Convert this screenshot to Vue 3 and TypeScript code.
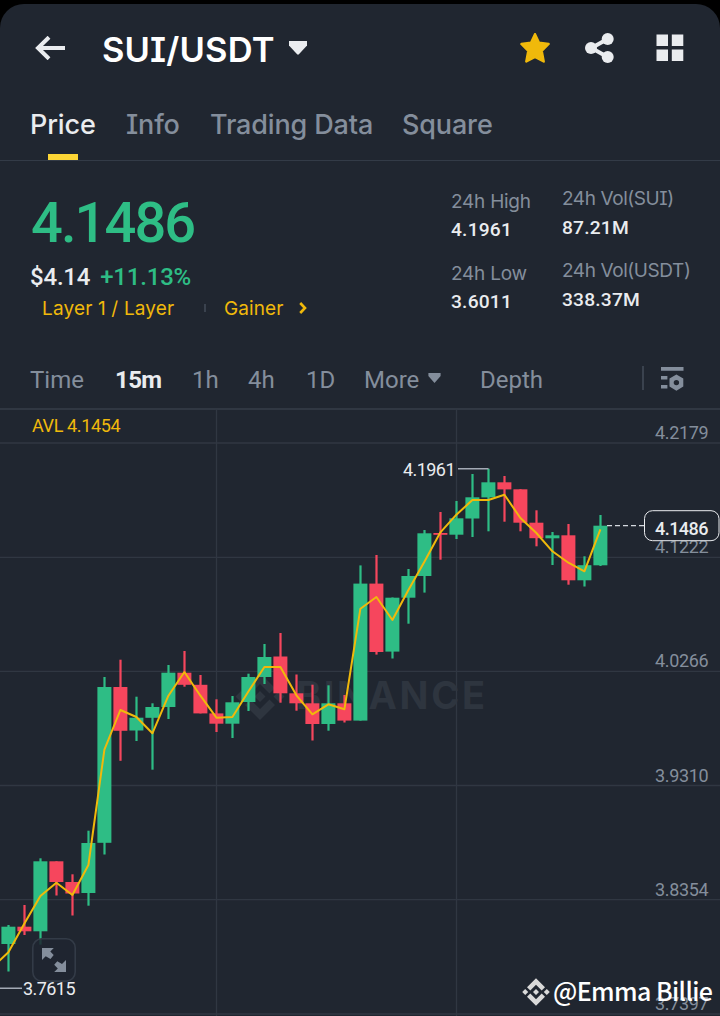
<script setup lang="ts">
type Candle = [high: number, top: number, bottom: number, low: number, up: boolean]

const tabs = ['Price', 'Info', 'Trading Data', 'Square']
const stats = [
  { label: '24h High', value: '4.1961' },
  { label: '24h Vol(SUI)', value: '87.21M' },
  { label: '24h Low', value: '3.6011' },
  { label: '24h Vol(USDT)', value: '338.37M' },
]
const intervals = ['Time', '15m', '1h', '4h', '1D']

const U = true
const D = false
const candles: Candle[] = [
  [925, 926.7, 944, 971.5, U], [905, 926.7, 931.3, 935, D], [858.3, 861.3, 931.3, 944.6, U],
  [861.3, 861.3, 882, 895.5, D], [874.3, 882, 893.5, 915.5, D], [830.7, 843, 893, 905.7, U],
  [677, 687, 842.8, 854.5, U], [659.7, 687, 730.8, 760.8, D], [696.7, 717.7, 730.5, 741, U],
  [703.3, 707, 717.8, 769.7, U], [665, 672.7, 707, 719, U], [651, 672.7, 684.8, 686.7, D],
  [675, 684.8, 713.4, 713.4, D], [699.3, 713.4, 723.7, 732, D], [696, 702.3, 723.7, 738, U],
  [673.7, 677, 702, 711, U], [644, 657, 677, 684, U], [633, 656.5, 693.3, 702.7, D],
  [674.5, 693.3, 703.3, 710.7, D], [684.7, 703.3, 724, 740.5, D], [685.3, 703.3, 724, 730.7, U],
  [695, 703.3, 720.6, 722.5, D], [565.4, 583.6, 720.6, 720.6, U], [555, 583.6, 652, 654.6, D],
  [597.5, 597.7, 651.6, 658.5, U], [569, 576, 597.7, 623.7, U], [530, 533.3, 576, 592.6, U],
  [512, 533, 534.8, 559.7, D], [501, 518.3, 534.7, 539, U], [474, 497.3, 518.5, 537, U],
  [468.7, 482.3, 497.4, 531.3, U], [476, 482.3, 489.4, 521.7, D], [489.2, 489.3, 522.7, 531.3, D],
  [510.3, 522.7, 538.2, 546.3, D], [532, 535.3, 538.3, 565, U], [524, 535.3, 580.3, 584.7, D],
  [556.3, 565.2, 580.3, 586.5, U], [515, 525.7, 565.3, 566, U],
]
const average = [
  952.3, 923.5, 896, 882.7, 895, 865, 749.7, 710, 717, 733.3, 695.7, 672, 695.7, 717.7, 717,
  691.5, 667, 667, 695.3, 714.3, 704.3, 709.3, 608.7, 597, 620, 590, 561.7, 532.3, 514.7, 500,
  500, 494.7, 518, 533, 551.3, 562.7, 571.3, 529.3,
]
const CHART_TOP = 408
const cx = (i: number): number => 8.4 + i * 16
const bars = candles.map(([high, top, bottom, low, up], i) => ({
  x: cx(i), high, top, low, height: bottom - top, up,
}))
const avgPoints = ['-1,961', ...average.map((y, i) => `${cx(i)},${y}`)].join(' ')
const gridRows = [443, 557.3, 671.4, 785.5, 899.6, 1014]
const scale = [
  { y: 439, text: '4.2179' }, { y: 553.4, text: '4.1222' }, { y: 667.3, text: '4.0266' },
  { y: 782, text: '3.9310' }, { y: 896, text: '3.8354' }, { y: 1010, text: '3.7397' },
]
</script>

<template>
  <main class="screen">
    <header class="topbar">
      <svg class="back" width="30" height="24" viewBox="0 0 30 24">
        <path d="M30 12H3M14 1.2 3 12 14 22.8" fill="none" stroke="#eaecef" stroke-width="4" />
      </svg>
      <h1 class="pair">SUI/USDT</h1>
      <svg class="caret" width="18" height="14" viewBox="0 0 18 14">
        <path d="M0 0H18V4.5L9.9 13.3Q9 14.200 8.100 13.300L0 4.500Z" fill="#eaecef" />
      </svg>
      <svg class="star" width="30" height="30" viewBox="0 0 30 30">
        <path d="M15 1.200 19 9.700 28.600 11 21.700 17.800 23.700 28.500 15 24 6.300 28.500 8.300 17.800 1.400 11 11 9.700Z" fill="#f0b90b" stroke="#f0b90b" stroke-width="2.400" stroke-linejoin="round" />
      </svg>
      <svg class="share" width="30" height="30" viewBox="0 0 30 30">
        <path d="M22.500 6 6.500 15 22.500 24" fill="none" stroke="#eaecef" stroke-width="4" />
        <g fill="#eaecef"><circle cx="22.700" cy="6" r="6" /><circle cx="6" cy="15" r="6" /><circle cx="22.700" cy="24" r="6" /></g>
      </svg>
      <svg class="apps" width="28" height="28" viewBox="0 0 28 28">
        <path d="M.5 .5H12V12H.5ZM15.800 .5H27.300V12H15.800ZM.5 15.600H12V27.100H.5ZM15.800 15.600H27.300V27.100H15.800Z" fill="#eaecef" />
      </svg>
    </header>

    <nav class="tabs">
      <span v-for="(tab, i) in tabs" :key="tab" class="tab" :class="{ active: i === 0 }">{{ tab }}</span>
    </nav>

    <section class="summary">
      <div class="quote">
        <div class="last">4.1486</div>
        <div class="fiat"><span class="usd">$4.14</span><span class="change">+11.13%</span></div>
        <div class="tags">
          <span class="layer">Layer 1 / Layer</span><i class="sep"></i><span class="gainer">Gainer</span>
          <svg class="chevron" width="8" height="12" viewBox="0 0 8 12">
            <path d="M1.200 1 6 6 1.200 11" fill="none" stroke="#f0b90b" stroke-width="2.600" />
          </svg>
        </div>
      </div>
      <dl class="stats">
        <div v-for="(s, i) in stats" :key="s.label" class="stat" :class="{ volume: i % 2 === 1 }">
          <dt>{{ s.label }}</dt>
          <dd>{{ s.value }}</dd>
        </div>
      </dl>
    </section>

    <nav class="intervals">
      <span v-for="(t, i) in intervals" :key="t" class="interval" :class="{ active: i === 1 }">{{ t }}</span>
      <span class="interval more">More
        <svg width="13" height="10" viewBox="0 0 13 10"><path d="M.4 0H12.600V3L6.500 10 .4 3Z" fill="#848e9c" /></svg>
      </span>
      <span class="interval">Depth</span>
      <i class="rule"></i>
      <svg class="settings" width="24" height="25" viewBox="0 0 24 25">
        <path d="M1 1H23.500V4.800H1ZM1 10H7.400V13.500H1ZM1 19H7.400V22.500H1Z" fill="#848e9c" />
        <path fill-rule="evenodd" d="M16.400 8.500 23.300 12.600V20.600L16.400 24.700 9.500 20.600V12.600ZM16.400 13.900A2.700 2.700 0 1 0 16.400 19.300 2.700 2.700 0 1 0 16.400 13.900Z" fill="#848e9c" />
      </svg>
    </nav>

    <svg class="chart" width="720" height="608" :viewBox="`0 ${CHART_TOP} 720 608`">
      <g class="grid">
        <line x1="0" x2="720" y1="409" y2="409" stroke-width="2" />
        <line v-for="y in gridRows" :key="y" x1="0" x2="720" :y1="y" :y2="y" />
        <line x1="216.500" x2="216.500" y1="409" y2="1016" />
        <line x1="456.500" x2="456.500" y1="409" y2="1016" />
      </g>

      <g class="brand">
        <path d="M260 673 275 688 269.500 693.500 260 684 250.500 693.500 245 688ZM241 691 246.500 696.500 241 702 235.500 696.500ZM279 691 284.500 696.500 279 702 273.500 696.500ZM260 691 265.500 696.500 260 702 254.500 696.500ZM245 705 250.500 699.500 260 709 269.500 699.500 275 705 260 720Z" />
        <text x="296" y="709" textLength="189">BINANCE</text>
      </g>

      <text v-for="s in scale" :key="s.text" class="tick" x="655" :y="s.y" textLength="53.500">{{ s.text }}</text>

      <g v-for="b in bars" :key="b.x" :class="b.up ? 'up' : 'down'">
        <rect :x="b.x - 1" :y="b.high" width="2.200" :height="b.low - b.high" />
        <rect :x="b.x - 7" :y="b.top" width="14" :height="b.height" />
      </g>
      <polyline class="avl" :points="avgPoints" />
      <text class="avl-label" x="32" y="432" textLength="88.500">AVL 4.1454</text>

      <path class="pointer" d="M458 468.700H488.500M0 988.300H22" />
      <text class="extreme" x="403" y="475.700" textLength="52.500">4.1961</text>
      <text class="extreme" x="23" y="995" textLength="52.500">3.7615</text>

      <line class="dash" x1="607" x2="644" y1="525.600" y2="525.600" />
      <rect class="pricebox" x="644.500" y="510.700" width="74.500" height="30" rx="8" />
      <text class="price" x="655" y="535" textLength="53.500">4.1486</text>

      <rect class="expand" x="32.800" y="938.700" width="42.400" height="42.400" rx="9" />
      <path class="arrows" d="M42 948H53.800L50.300 951.500 53.700 955 50.500 959 45.700 956.300 42 960ZM66 972H54.200L57.800 968.500 54.200 964.800 57.300 961.300 62 964 66 960Z" />

      <g class="signature">
        <path d="M536 978.300 545 987.200 541.700 990.500 536 984.800 530.300 990.500 527 987.200ZM525.200 989 528.200 992 525.200 995 522.200 992ZM546.800 989 549.800 992 546.800 995 543.800 992ZM536 989 539 992 536 995 533 992ZM527 996.800 530.300 993.500 536 999.200 541.700 993.500 545 996.800 536 1005.700Z" />
        <text x="553" y="1001" textLength="160">@Emma Billie</text>
      </g>
    </svg>
  </main>
</template>

<style>
html { background: #000; }
</style>

<style scoped>
.screen {
  width: 720px;
  height: 1012px;
  margin-top: 4px;
  overflow: hidden;
  border-radius: 24px 24px 0 0;
  background: #202630;
  color: #eaecef;
  font-family: Inter, "Liberation Sans", sans-serif;
  font-feature-settings: "cv08";
  display: flex;
  flex-direction: column;
}
svg { display: block; flex: none; }
.topbar { height: 88px; display: flex; align-items: center; padding-left: 35px; flex: none; }
.pair { margin: 2px 0 0 37px; width: 174px; font-size: 34.500px; font-weight: 600; color: #fff; letter-spacing: .15px; white-space: nowrap; }
.caret { margin-left: 13px; }
.star { margin-left: 213px; }
.share { margin-left: 35px; }
.apps { margin-left: 41px; }

.tabs { height: 68px; flex: none; display: grid; grid-template-columns: 96px 84px 192px 120px; padding-left: 30px; border-bottom: 1px solid #333b47; }
.tab { font-size: 27px; font-weight: 500; line-height: 66px; letter-spacing: -.15px; color: #848e9c; white-space: nowrap; }
.tab.active { color: #eaecef; position: relative; }
.tab.active::after { content: ""; position: absolute; left: 18px; bottom: 0; width: 30px; height: 6px; background: #fcd535; }

.summary { height: 187px; flex: none; display: grid; grid-template-columns: 421px 1fr; padding-left: 30px; }
.last { font: 500 56px/60px Roboto, sans-serif; color: #2ebd85; letter-spacing: -1.900px; margin-top: 32px; padding-left: 1px; }
.fiat { font: 500 24px/30px Roboto, sans-serif; letter-spacing: -.2px; margin-top: 9px; display: flex; gap: 10px; }
.change { color: #2ebd85; }
.tags { display: flex; align-items: center; height: 30px; margin-top: 1px; padding-left: 12px; color: #f0b90b; font-size: 19px; }
.layer { width: 162px; letter-spacing: .16px; }
.sep { width: 2px; height: 8px; background: #3a424e; }
.gainer { margin-left: 18px; width: 75px; letter-spacing: .1px; }
.stats { margin: 27px 0 0; display: grid; grid-template-columns: 111px 1fr; grid-auto-rows: 72px; }
.stat { padding-top: 2px; white-space: nowrap; }
.volume { padding-top: 0; margin-top: -1px; }
dt { color: #848e9c; font-size: 19px; line-height: 24px; letter-spacing: -.25px; }
.volume dt { letter-spacing: -.42px; }
dd { margin: 2px 0 0; font: 500 19.200px/28px Roboto, sans-serif; letter-spacing: .2px; }
.volume dd { margin-top: 3px; }

.intervals { height: 60px; flex: none; display: grid; align-items: center; grid-template-columns: 85px 77px 56px 58px 58px 116px 162px 18px 24px; padding-left: 30px; font: 400 24px Roboto, sans-serif; color: #848e9c; }
.interval { padding-top: 3px; }
.interval.active { color: #eaecef; font-weight: 700; letter-spacing: -.6px; }
.more { display: flex; align-items: center; gap: 9px; }
.more svg { margin-top: -3px; }
.rule { width: 2px; height: 24px; background: #3a424e; }
.chart { font-family: Roboto, "Liberation Sans", sans-serif; }
.grid { stroke: #303742; stroke-width: 1.300; }
.brand { fill: #2e353f; }
.brand text { font: 700 38px Inter, sans-serif; font-feature-settings: normal; }
.tick { fill: #848e9c; font-size: 18px; }
.up { fill: #2ebd85; }
.down { fill: #f6465d; }
.avl { fill: none; stroke: #f0b90b; stroke-width: 2; stroke-linejoin: round; }
.avl-label { fill: #f0b90b; font-size: 18px; }
.extreme { fill: #eaecef; font-size: 18px; }
.pointer { fill: none; stroke: #a3aab5; stroke-width: 1.500; }
.dash { stroke: #d5d9df; stroke-width: 1.200; stroke-dasharray: 5 3; }
.pricebox { fill: #202630; stroke: #eaecef; stroke-width: 1; }
.price { fill: #eaecef; font-size: 18px; font-weight: 500; }
.expand { fill: #202630; fill-opacity: .85; stroke: #333b47; stroke-width: 1.600; }
.arrows { fill: #848e9c; }
.signature path { fill: #d9d9d9; }
.signature text { fill: #fff; font: 500 25px "Noto Sans CJK SC", "Noto Sans", sans-serif; font-feature-settings: normal; }
</style>
